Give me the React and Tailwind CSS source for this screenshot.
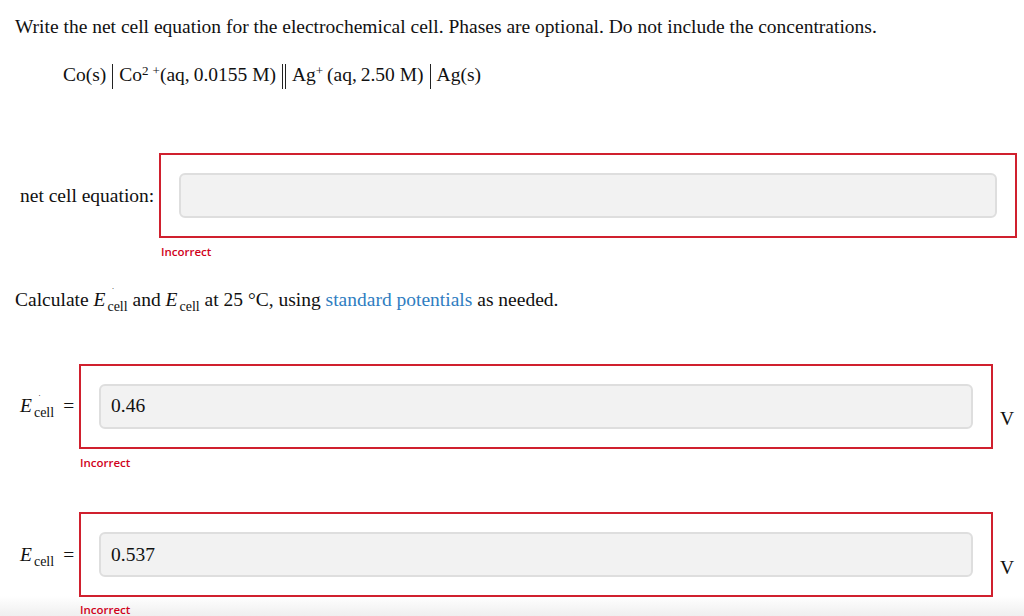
import React from "react";

const serif = "font-['Liberation_Serif',serif]";

const Incorrect = ({ className = "" }) => (
  <div
    className={`font-['Open_Sans',sans-serif] text-[11.5px] font-semibold leading-none text-[#d0021b] ${className}`}
  >
    Incorrect
  </div>
);

const AnswerBox = ({ value, className = "" }) => (
  <div className={`border-2 border-[#d0202e] p-[18px] ${className}`}>
    <div className="flex h-[45px] items-center rounded-[6px] border-2 border-[#dedede] bg-[#f2f2f2] pl-[10px] text-[19.5px] text-[#111]">
      {value}
    </div>
  </div>
);

const Ecell = ({ standard }) => (
  <span className="inline-flex items-baseline">
    <span className="italic">E</span>
    <span className="relative ml-[2px] text-[14px]">
      {standard && (
        <span className="absolute left-[4px] top-[-3px] text-[9px] leading-none">˙</span>
      )}
      <span className="relative top-[5px]">cell</span>
    </span>
  </span>
);

const Bar = ({ double }) => (
  <span className="mx-[6px] inline-flex h-[25px] gap-[2px] align-middle">
    <span className="h-full w-px bg-[#222]" />
    {double && <span className="h-full w-px bg-[#222]" />}
  </span>
);

export default function App() {
  return (
    <div className={`relative h-[616px] w-[1024px] overflow-hidden bg-white ${serif} text-[19.5px] text-[#111]`}>
      <div className="pointer-events-none absolute bottom-0 left-0 h-[20px] w-full bg-gradient-to-b from-white to-[#efefef]" />

      <div className="relative">
        <p className="pl-[15px] pt-[15px] leading-[24px]">
          Write the net cell equation for the electrochemical cell. Phases are optional. Do not include the concentrations.
        </p>

        <p className="mt-[24px] pl-[63px] leading-[24px]">
          Co(s)
          <Bar />
          Co<sup className="text-[13px]">2</sup>
          <sup className="ml-[4px] text-[13px]">+</sup>(aq,&thinsp;0.0155 M)
          <Bar double />
          Ag<sup className="text-[13px]">+</sup>&thinsp;(aq,&thinsp;2.50 M)
          <Bar />
          Ag(s)
        </p>

        <div className="mt-[64px] flex items-center pl-[20px]">
          <span className="w-[139px] leading-none">net cell equation:</span>
          <AnswerBox className="w-[858px]" />
        </div>
        <Incorrect className="ml-[161px] mt-[8px]" />

        <p className="mt-[30px] pl-[15px] leading-[24px]">
          Calculate <Ecell standard /> and <Ecell /> at 25 °C, using{" "}
          <span className="text-[#2f7dc1]">standard potentials</span> as needed.
        </p>

        <div className="mt-[50px] flex items-center pl-[20px]">
          <span className="flex w-[59px] items-center">
            <Ecell standard />
            <span className="ml-[9px]">=</span>
          </span>
          <AnswerBox value="0.46" className="w-[914px]" />
          <span className="ml-[7px] mt-[26px]">V</span>
        </div>
        <Incorrect className="ml-[80px] mt-[8px]" />

        <div className="mt-[44px] flex items-center pl-[20px]">
          <span className="flex w-[59px] items-center">
            <Ecell />
            <span className="ml-[9px]">=</span>
          </span>
          <AnswerBox value="0.537" className="w-[914px]" />
          <span className="ml-[7px] mt-[26px]">V</span>
        </div>
        <Incorrect className="ml-[80px] mt-[7px]" />
      </div>
    </div>
  );
}
